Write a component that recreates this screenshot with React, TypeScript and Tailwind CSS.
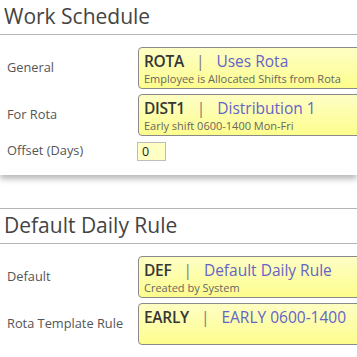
import React from 'react';

type Pick = { code: string; desc: string; sub?: string };

const PickBox = ({ code, desc, sub }: Pick) => (
  <div className="w-[240px] h-[42px] shrink-0 rounded-l-[4px] border border-[#8a8a8a] bg-gradient-to-b from-[#fefec4] to-[#fdfd8c] pl-[5px] pt-[3px]">
    <div className="flex items-center text-[15.5px] leading-[21px] whitespace-nowrap">
      <span className="font-semibold text-[#363636] tracking-[-0.3px]">{code}</span>
      <span className="mx-[12px] text-[#7a7a7a]">|</span>
      <span className="font-medium text-[#6464c8]">{desc}</span>
    </div>
    {sub && <div className="text-[11px] leading-[14px] text-[#666] whitespace-nowrap">{sub}</div>}
  </div>
);

const Row = ({ label, children }: { label: string; children: React.ReactNode }) => (
  <div className="flex items-center">
    <div className="w-[138px] shrink-0 pl-[7px] text-[12.8px] text-[#555]">{label}</div>
    {children}
  </div>
);

const Heading = ({ title }: { title: string }) => (
  <div className="h-[35px] border-b border-[#b4b4b4] pl-[4px] pt-[2px] text-[21px] leading-[28px] text-[#444]">
    {title}
  </div>
);

export default function App() {
  return (
    <div className="w-[357px] h-[357px] overflow-hidden bg-white font-['Open_Sans',sans-serif]">
      <div className="bg-white shadow-[0_4px_6px_rgba(0,0,0,0.28)] pb-[14px]">
        <Heading title="Work Schedule" />
        <div className="flex flex-col gap-[5px] pt-[12px]">
          <Row label="General">
            <PickBox code="ROTA" desc="Uses Rota" sub="Employee is Allocated Shifts from Rota" />
          </Row>
          <Row label="For Rota">
            <PickBox code="DIST1" desc="Distribution 1" sub="Early shift 0600-1400 Mon-Fri" />
          </Row>
          <Row label="Offset (Days)">
            <div className="mt-[1px] -ml-[1px] h-[19px] w-[29px] border border-[#bdbdbd] bg-[#ffffc4] pl-[4px] text-[12.5px] leading-[17px] text-[#222]">
              0
            </div>
          </Row>
        </div>
      </div>
      <div className="mt-[33px] border-t border-[#b4b4b4] bg-white">
        <Heading title="Default Daily Rule" />
        <div className="flex flex-col gap-[5px] pt-[12px]">
          <Row label="Default">
            <PickBox code="DEF" desc="Default Daily Rule" sub="Created by System" />
          </Row>
          <Row label="Rota Template Rule">
            <PickBox code="EARLY" desc="EARLY 0600-1400" />
          </Row>
        </div>
      </div>
    </div>
  );
}
